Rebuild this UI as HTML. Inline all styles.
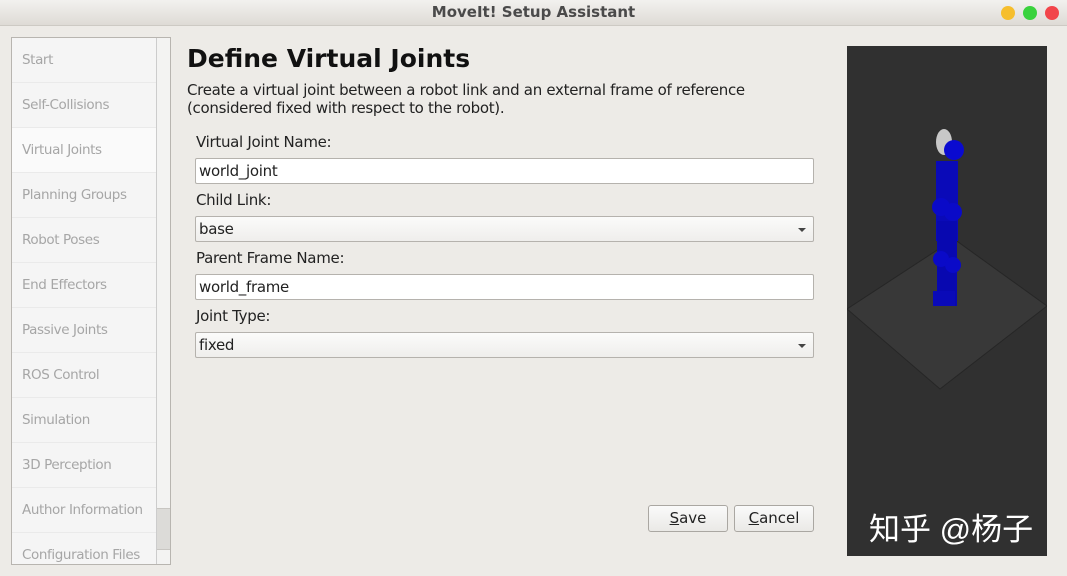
<!DOCTYPE html>
<html><head><meta charset="utf-8"><style>
*{box-sizing:border-box;margin:0;padding:0}
body{width:1067px;height:576px;background:#edebe7;font-family:"Liberation Sans","DejaVu Sans",sans-serif;position:relative;overflow:hidden;color:#3c3c3c}
.title{position:absolute;left:0;top:0;width:1067px;height:26px;background:linear-gradient(#f2f1ef,#dedbd6);border-bottom:1px solid #cdcac4;text-align:center;font-weight:bold;font-size:15px;line-height:25px;color:#4a4a4a;font-family:"DejaVu Sans",sans-serif}
.dot{position:absolute;top:6px;width:14px;height:14px;border-radius:50%}
.side{position:absolute;left:11px;top:37px;width:160px;height:528px;border:1px solid #b8b5b0;background:#f7f7f6;overflow:hidden}
.item{height:45px;border-bottom:1px solid #eaeaea;padding-left:10px;line-height:45px;font-size:13.5px;color:#a6a6a6;width:144px;background:#f5f5f5;font-family:"DejaVu Sans",sans-serif;letter-spacing:-0.4px;white-space:nowrap}
.sb{position:absolute;left:144px;top:0;width:15px;height:526px;border-left:1px solid #ccc;background:#f3f3f2}
.h1{position:absolute;left:187px;top:44px;font-size:25px;font-weight:bold;color:#111;font-family:"DejaVu Sans",sans-serif}
.desc{position:absolute;left:187px;top:81px;font-size:15px;line-height:18px;color:#222;font-family:"DejaVu Sans",sans-serif;letter-spacing:-0.3px}
.lbl{position:absolute;left:196px;font-size:15px;color:#222;font-family:"DejaVu Sans",sans-serif;letter-spacing:-0.3px}
.inp{position:absolute;left:195px;width:619px;height:26px;border:1px solid #b5b2ad;border-radius:2px;background:#fff;font-size:15px;line-height:24px;padding-left:3px;color:#222;font-family:"DejaVu Sans",sans-serif;letter-spacing:-0.3px}
.cb{background:linear-gradient(#fbfbfa,#efeeec)}
.arr{position:absolute;right:7px;top:11px;border-left:4px solid transparent;border-right:4px solid transparent;border-top:4px solid #444}
.btn{position:absolute;top:505px;height:27px;border:1px solid #aaa7a2;border-radius:3px;background:linear-gradient(#fafafa,#eae9e6);font-size:15px;line-height:25px;text-align:center;color:#222;font-family:"DejaVu Sans",sans-serif}
.view{position:absolute;left:847px;top:46px;width:200px;height:510px;background:#303030;overflow:hidden}
</style></head><body>
<div class="title">MoveIt! Setup Assistant
<div class="dot" style="left:1001px;background:#f6be2c"></div>
<div class="dot" style="left:1023px;background:#39d23d"></div>
<div class="dot" style="left:1045px;background:#f2454a"></div></div>
<div class="side">
<div class="item">Start</div><div class="item">Self-Collisions</div><div class="item" style="background:#fafafa">Virtual Joints</div><div class="item">Planning Groups</div><div class="item">Robot Poses</div><div class="item">End Effectors</div><div class="item">Passive Joints</div><div class="item">ROS Control</div><div class="item">Simulation</div><div class="item">3D Perception</div><div class="item">Author Information</div><div class="item">Configuration Files</div>
<div class="sb"><div style="position:absolute;left:0;top:470px;width:14px;height:42px;background:#dcdbd8;border-top:1px solid #c8c6c2;border-bottom:1px solid #c8c6c2"></div></div>
</div>
<div class="h1">Define Virtual Joints</div>
<div class="desc">Create a virtual joint between a robot link and an external frame of reference<br>(considered fixed with respect to the robot).</div>
<div class="lbl" style="top:133px">Virtual Joint Name:</div>
<div class="inp" style="top:158px">world_joint</div>
<div class="lbl" style="top:191px">Child Link:</div>
<div class="inp cb" style="top:216px">base<div class="arr"></div></div>
<div class="lbl" style="top:249px">Parent Frame Name:</div>
<div class="inp" style="top:274px">world_frame</div>
<div class="lbl" style="top:307px">Joint Type:</div>
<div class="inp cb" style="top:332px">fixed<div class="arr"></div></div>
<div class="btn" style="left:648px;width:80px"><u>S</u>ave</div>
<div class="btn" style="left:734px;width:80px"><u>C</u>ancel</div>
<div class="view"><svg width="200" height="510">
<polygon points="0,263 107,193 200,260 93,343" fill="#383838" stroke="#262626"/>
<rect x="89" y="115" width="22" height="80" fill="#0a0ab8"/>
<rect x="90" y="175" width="20" height="80" fill="#0808b0"/>
<rect x="90" y="230" width="20" height="30" fill="#0808b0"/>
<rect x="86" y="245" width="22" height="15" fill="#0a0ab8"/>
<ellipse cx="97" cy="96" rx="8" ry="13" fill="#c8c8c8"/>
<circle cx="107" cy="104" r="10" fill="#0a0ad0"/>
<circle cx="94" cy="161" r="9" fill="#0a0ac8"/><circle cx="106" cy="166" r="9" fill="#0a0ac8"/>
<circle cx="94" cy="213" r="8" fill="#0a0ac8"/><circle cx="106" cy="219" r="8" fill="#0a0ac8"/>
<text x="22" y="494" font-family="Liberation Sans,Noto Sans CJK SC,sans-serif" font-size="31" fill="#fff">知乎 @杨子</text>
</svg></div>
</body></html>
